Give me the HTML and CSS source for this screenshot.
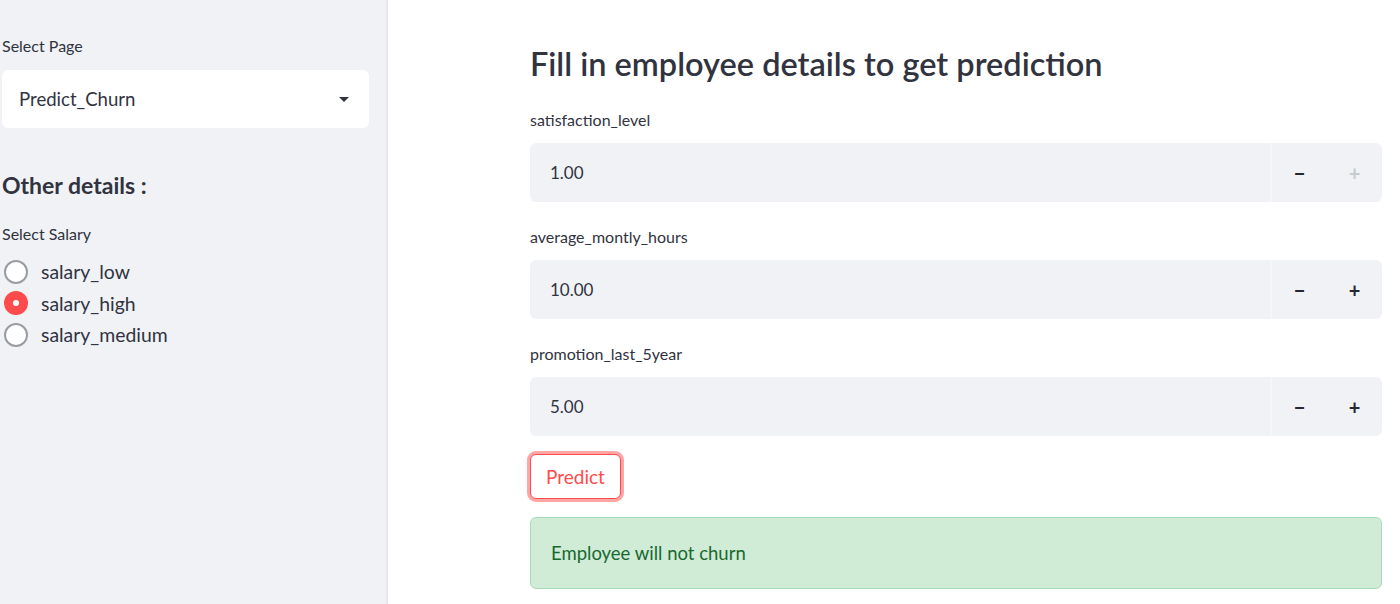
FILE: index.html
```html
<!DOCTYPE html>
<html lang="en">
<head>
    <meta charset="UTF-8">
    <meta name="viewport" content="width=device-width, initial-scale=1.0">
    <title>Employee Churn</title>
    <link rel="stylesheet" href="styles.css">
</head>
<body>
    <div class="app">
        <aside class="sidebar">
            <label class="label">Select Page</label>
            <div class="select">
                <span>Predict_Churn</span>
                <span class="caret"></span>
            </div>
            <h3 class="side-title">Other details :</h3>
            <label class="label">Select Salary</label>
            <div class="radio-group">
                <div class="radio"><span class="dot"></span>salary_low</div>
                <div class="radio checked"><span class="dot"></span>salary_high</div>
                <div class="radio"><span class="dot"></span>salary_medium</div>
            </div>
        </aside>
        <main class="main">
            <h1>Fill in employee details to get prediction</h1>

            <label class="label">satisfaction_level</label>
            <div class="number-input">
                <span class="value">1.00</span>
                <div class="steps">
                    <span class="step">&minus;</span>
                    <span class="step disabled">+</span>
                </div>
            </div>

            <label class="label">average_montly_hours</label>
            <div class="number-input">
                <span class="value">10.00</span>
                <div class="steps">
                    <span class="step">&minus;</span>
                    <span class="step">+</span>
                </div>
            </div>

            <label class="label">promotion_last_5year</label>
            <div class="number-input">
                <span class="value">5.00</span>
                <div class="steps">
                    <span class="step">&minus;</span>
                    <span class="step">+</span>
                </div>
            </div>

            <button class="predict">Predict</button>

            <div class="success">Employee will not churn</div>
        </main>
    </div>
</body>
</html>
```

FILE: styles.css
```css
body {
    margin: 0;
    padding: 0;
    font-family: Lato, "Noto Sans", sans-serif;
    color: #31333f;
    background: white;
}
.app {
    display: flex;
    height: 604px;
    overflow: hidden;
}
.sidebar {
    width: 388px;
    flex-shrink: 0;
    background: #f0f2f6;
    border-right: 2px solid #e6e8ee;
    padding: 36px 0 0 2px;
    box-sizing: border-box;
}
.label {
    display: block;
    font-size: 16px;
    color: #31333f;
    line-height: 20px;
}
.select {
    margin-top: 14px;
    width: 367px;
    height: 58px;
    background: white;
    border-radius: 6px;
    display: flex;
    align-items: center;
    justify-content: space-between;
    padding: 0 20px 0 17px;
    box-sizing: border-box;
    font-size: 18.6px;
}
.caret {
    width: 0;
    height: 0;
    border-left: 5px solid transparent;
    border-right: 5px solid transparent;
    border-top: 5px solid #31333f;
}
.side-title {
    font-size: 23px;
    font-weight: 700;
    margin: 43px 0 25px;
    line-height: 28px;
}
.radio-group {
    margin-top: 12px;
}
.radio {
    display: flex;
    align-items: center;
    gap: 13px;
    height: 31.5px;
    font-size: 19.4px;
    padding-left: 2px;
}
.dot {
    width: 24px;
    height: 24px;
    border: 2px solid #9a9ba3;
    border-radius: 50%;
    background: white;
    box-sizing: border-box;
    flex-shrink: 0;
}
.checked .dot {
    border: 9px solid #ff4b4b;
    background: white;
}
.main {
    flex: 1;
    padding: 44px 18px 0 142px;
}
h1 {
    font-size: 32.5px;
    font-weight: 600;
    margin: 0 0 26px;
    line-height: 40px;
}
.main .label {
    margin-bottom: 13px;
}
.number-input {
    display: flex;
    align-items: center;
    justify-content: space-between;
    height: 59px;
    background: #f0f2f6;
    border-radius: 6px;
    margin-bottom: 25px;
    font-size: 17px;
}
.value {
    padding-left: 20px;
}
.steps {
    display: flex;
    height: 100%;
    border-left: 2px solid #f5f6f9;
}
.step {
    width: 55px;
    display: flex;
    align-items: center;
    justify-content: center;
    font-size: 20px;
    font-weight: 700;
    color: #262730;
}
.step.disabled {
    color: #c8cad2;
}
.predict {
    display: block;
    margin-top: -7px;
    padding: 0 15px;
    height: 45px;
    font-family: inherit;
    font-size: 19px;
    color: #ff4b4b;
    background: white;
    border: 1px solid #ff4b4b;
    border-radius: 6px;
    box-shadow: 0 0 0 3px rgba(255, 75, 75, 0.5);
    cursor: pointer;
}
.success {
    margin-top: 18px;
    height: 72px;
    display: flex;
    align-items: center;
    padding-left: 20px;
    background: #d0ecd7;
    border: 1px solid #a9dcb8;
    border-radius: 6px;
    color: #17692f;
    font-size: 18.5px;
    box-sizing: border-box;
}
```
